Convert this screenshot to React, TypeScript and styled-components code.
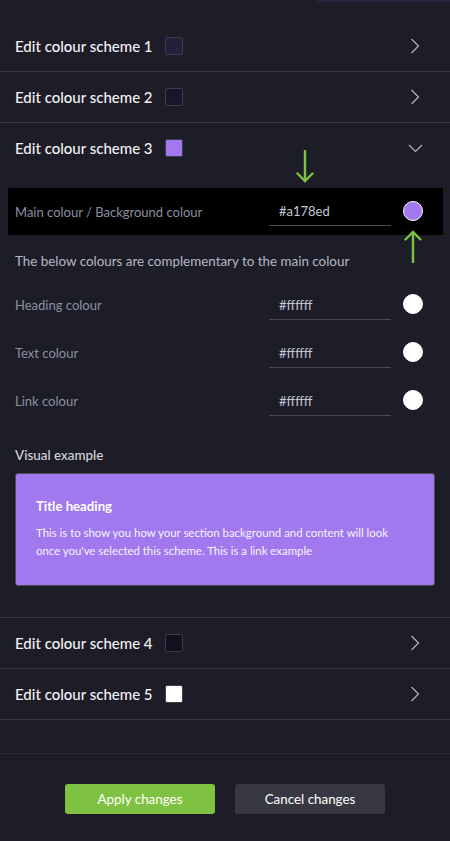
import React from 'react';
import styled, { createGlobalStyle } from 'styled-components';

const GlobalStyle = createGlobalStyle`
  html, body {
    margin: 0;
    padding: 0;
    background: #1d1d27;
    font-family: Lato, "Noto Sans", sans-serif;
  }
`;

const Page = styled.div`
  width: 450px;
  min-height: 841px;
  background: #1d1d27;
  display: flex;
  flex-direction: column;
`;

const TopAccent = styled.div`
  height: 2px;
  margin-left: 318px;
  background: #29273f;
  margin-bottom: 19px;
`;

const Item = styled.div`
  border-bottom: 1px solid #3a3a44;
`;

const Header = styled.div`
  height: 50px;
  display: flex;
  align-items: center;
  padding: 0 30px 0 15px;
`;

const Title = styled.span`
  font-size: 15px;
  font-weight: 500;
  color: #f2f2f5;
`;

const Swatch = styled.span<{ color: string }>`
  width: 18px;
  height: 18px;
  margin-left: 12px;
  border-radius: 2px;
  box-sizing: border-box;
  border: 1px solid #3c3c4a;
  background: ${p => p.color};
`;

const Chevron = styled.span`
  margin-left: auto;
  display: flex;
  align-items: center;
`;

const Body = styled.div`
  position: relative;
  padding: 15px 0 31px;
`;

const FieldRow = styled.div<{ highlighted?: boolean }>`
  height: ${p => (p.highlighted ? '47px' : '48px')};
  margin: 0 7px 0 8px;
  padding: 0 20px 0 7px;
  display: flex;
  align-items: center;
  background: ${p => (p.highlighted ? '#000' : 'transparent')};
`;

const FieldLabel = styled.span`
  flex: 1;
  font-size: 13px;
  color: #8a90a2;
`;

const HexInput = styled.div`
  width: 122px;
  box-sizing: border-box;
  padding: 2px 10px 6px;
  margin-top: 4px;
  border-bottom: 1px solid #4a4a55;
  font-size: 13px;
  color: #c4c8d6;
`;

const Dot = styled.span<{ color: string }>`
  width: 20px;
  height: 20px;
  margin-left: 12px;
  margin-top: -2px;
  border-radius: 50%;
  box-sizing: border-box;
  border: 1px solid #ffffff;
  background: ${p => p.color};
`;

const Note = styled.p`
  margin: 16px 15px 10px;
  font-size: 13.4px;
  line-height: 20px;
  color: #b4b8c6;
`;

const SectionLabel = styled.p`
  margin: 20px 15px 8px;
  font-size: 13.4px;
  line-height: 20px;
  font-weight: 500;
  color: #d4d6de;
`;

const Preview = styled.div<{ color: string }>`
  margin: 0 15px;
  height: 113px;
  box-sizing: border-box;
  padding: 22px 20px 0 20px;
  border: 1px solid #4c4c58;
  border-radius: 3px;
  background: ${p => p.color};
`;

const PreviewTitle = styled.div`
  font-size: 13.2px;
  font-weight: 700;
  color: #ffffff;
  line-height: 20px;
  margin-bottom: 8px;
`;

const PreviewText = styled.div`
  font-size: 11.4px;
  line-height: 18px;
  color: #f6f4ff;
`;

const Pointer = styled.svg<{ left: number; top: number }>`
  position: absolute;
  left: ${p => p.left}px;
  top: ${p => p.top}px;
`;

const Spacer = styled.div`
  height: 33px;
  border-bottom: 1px solid #2a2a34;
`;

const Footer = styled.div`
  display: flex;
  justify-content: center;
  gap: 20px;
  padding-top: 30px;
`;

const Button = styled.button<{ primary?: boolean }>`
  width: 150px;
  height: 30px;
  border: none;
  border-radius: 3px;
  font-family: inherit;
  font-size: 13.4px;
  color: #ffffff;
  background: ${p => (p.primary ? '#7fc241' : '#383842')};
  cursor: pointer;
`;

const ChevronRight = () => (
  <svg width="10" height="16" viewBox="0 0 10 16">
    <polyline points="1.5,1 8.5,8 1.5,15" fill="none" stroke="#b4b4bc" strokeWidth="1.2" />
  </svg>
);

const ChevronDown = () => (
  <svg width="15" height="9" viewBox="0 0 15 9" style={{ marginRight: -3 }}>
    <polyline points="1,1 7.5,7.5 14,1" fill="none" stroke="#b4b4bc" strokeWidth="1.2" />
  </svg>
);

const GreenArrow = ({ left, top, up }: { left: number; top: number; up?: boolean }) => (
  <Pointer left={left} top={top} width="18" height="33" viewBox="0 0 18 33">
    <g fill="none" stroke="#7dc142" strokeWidth="2.4" strokeLinecap="round" transform={up ? 'rotate(180 9 16.5)' : undefined}>
      <line x1="9" y1="1" x2="9" y2="31" />
      <polyline points="1.5,23.5 9,31 16.5,23.5" />
    </g>
  </Pointer>
);

const schemes = [
  { id: 1, color: '#22203a' },
  { id: 2, color: '#17162a' },
  { id: 3, color: '#a178ed', open: true },
  { id: 4, color: '#120f1f' },
  { id: 5, color: '#ffffff' },
];

const fields = [
  { label: 'Heading colour', value: '#ffffff' },
  { label: 'Text colour', value: '#ffffff' },
  { label: 'Link colour', value: '#ffffff' },
];

const SchemeBody = ({ color }: { color: string }) => (
  <Body>
    <GreenArrow left={296} top={-23} />
    <GreenArrow left={404} top={57} up />
    <FieldRow highlighted>
      <FieldLabel>Main colour / Background colour</FieldLabel>
      <HexInput>{color}</HexInput>
      <Dot color={color} />
    </FieldRow>
    <Note>The below colours are complementary to the main colour</Note>
    {fields.map(f => (
      <FieldRow key={f.label}>
        <FieldLabel>{f.label}</FieldLabel>
        <HexInput>{f.value}</HexInput>
        <Dot color={f.value} />
      </FieldRow>
    ))}
    <SectionLabel>Visual example</SectionLabel>
    <Preview color={color}>
      <PreviewTitle>Title heading</PreviewTitle>
      <PreviewText>
        This is to show you how your section background and content will look once you've selected this scheme. This is a link example
      </PreviewText>
    </Preview>
  </Body>
);

export default function App() {
  return (
    <Page>
      <GlobalStyle />
      <TopAccent />
      {schemes.map(s => (
        <Item key={s.id}>
          <Header>
            <Title>Edit colour scheme {s.id}</Title>
            <Swatch color={s.color} />
            <Chevron>{s.open ? <ChevronDown /> : <ChevronRight />}</Chevron>
          </Header>
          {s.open && <SchemeBody color={s.color} />}
        </Item>
      ))}
      <Spacer />
      <Footer>
        <Button primary>Apply changes</Button>
        <Button>Cancel changes</Button>
      </Footer>
    </Page>
  );
}
